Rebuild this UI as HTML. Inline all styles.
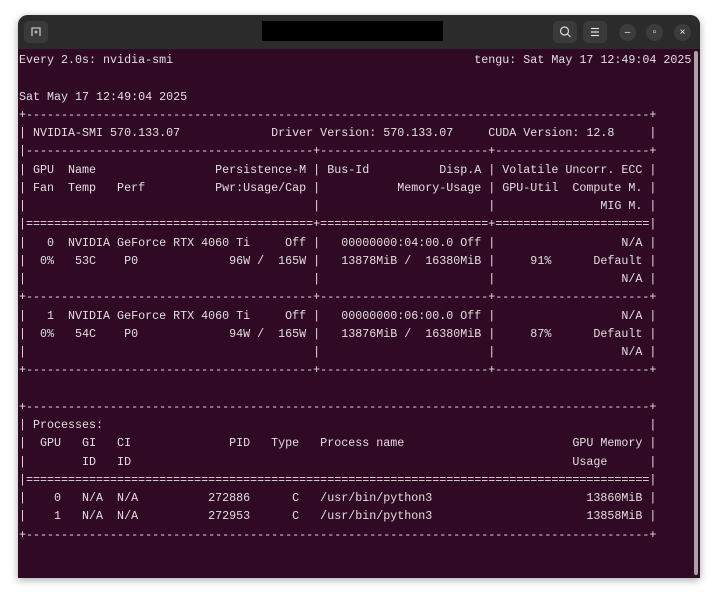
<!DOCTYPE html>
<html><head><meta charset="utf-8"><style>
html,body{margin:0;padding:0;width:718px;height:598px;background:#fff;overflow:hidden}
.win{position:absolute;left:18px;top:15px;width:682px;height:563px;background:#300a24;border-radius:10px 10px 0 0;overflow:hidden;box-shadow:0 2px 8px rgba(0,0,0,.35)}
.tb{position:absolute;left:0;top:0;width:682px;height:34px;background:#2b2b2b}
.btn{position:absolute;top:6px;width:24px;height:22px;border-radius:5px;background:#3a3a3a}
.circ{position:absolute;top:9px;width:17px;height:17px;border-radius:50%;background:#3c3c3c;color:#eee;font:10px "Liberation Sans",sans-serif;text-align:center;line-height:17px}
.title{position:absolute;left:244px;top:6px;width:181px;height:20px;background:#000}
pre{position:absolute;left:1px;top:36px;margin:0;font-family:"Liberation Mono",monospace;font-size:11.68px;line-height:18.25px;color:#e2dde0;white-space:pre}
.sb{position:absolute;left:676px;top:36px;width:4px;height:524px;background:#a9a3a7;border-radius:2px}
</style></head><body>
<div class="win">
<div class="tb">
<div class="btn" style="left:6px"><svg width="24" height="22"><path d="M8 15V7h8v8M10.5 11h3M12 9.5v3" stroke="#ddd" fill="none" stroke-width="1.1"/></svg></div>
<div class="title"></div>
<div class="btn" style="left:535px"><svg width="24" height="22"><circle cx="11.5" cy="10" r="4" stroke="#ddd" fill="none" stroke-width="1.2"/><path d="M14.5 13l3 3" stroke="#ddd" stroke-width="1.2"/></svg></div>
<div class="btn" style="left:565px"><svg width="24" height="22"><path d="M8 7.5h8M8 11h8M8 14.5h8" stroke="#ddd" stroke-width="1.2"/></svg></div>
<div class="circ" style="left:601px">–</div>
<div class="circ" style="left:628px">▫</div>
<div class="circ" style="left:656px">×</div>
</div>
<pre>Every 2.0s: nvidia-smi                                           tengu: Sat May 17 12:49:04 2025

Sat May 17 12:49:04 2025
+-----------------------------------------------------------------------------------------+
| NVIDIA-SMI 570.133.07             Driver Version: 570.133.07     CUDA Version: 12.8     |
|-----------------------------------------+------------------------+----------------------+
| GPU  Name                 Persistence-M | Bus-Id          Disp.A | Volatile Uncorr. ECC |
| Fan  Temp   Perf          Pwr:Usage/Cap |           Memory-Usage | GPU-Util  Compute M. |
|                                         |                        |               MIG M. |
|=========================================+========================+======================|
|   0  NVIDIA GeForce RTX 4060 Ti     Off |   00000000:04:00.0 Off |                  N/A |
|  0%   53C    P0             96W /  165W |   13878MiB /  16380MiB |     91%      Default |
|                                         |                        |                  N/A |
+-----------------------------------------+------------------------+----------------------+
|   1  NVIDIA GeForce RTX 4060 Ti     Off |   00000000:06:00.0 Off |                  N/A |
|  0%   54C    P0             94W /  165W |   13876MiB /  16380MiB |     87%      Default |
|                                         |                        |                  N/A |
+-----------------------------------------+------------------------+----------------------+

+-----------------------------------------------------------------------------------------+
| Processes:                                                                              |
|  GPU   GI   CI              PID   Type   Process name                        GPU Memory |
|        ID   ID                                                               Usage      |
|=========================================================================================|
|    0   N/A  N/A          272886      C   /usr/bin/python3                      13860MiB |
|    1   N/A  N/A          272953      C   /usr/bin/python3                      13858MiB |
+-----------------------------------------------------------------------------------------+</pre>
<div class="sb"></div>
</div>
</body></html>
